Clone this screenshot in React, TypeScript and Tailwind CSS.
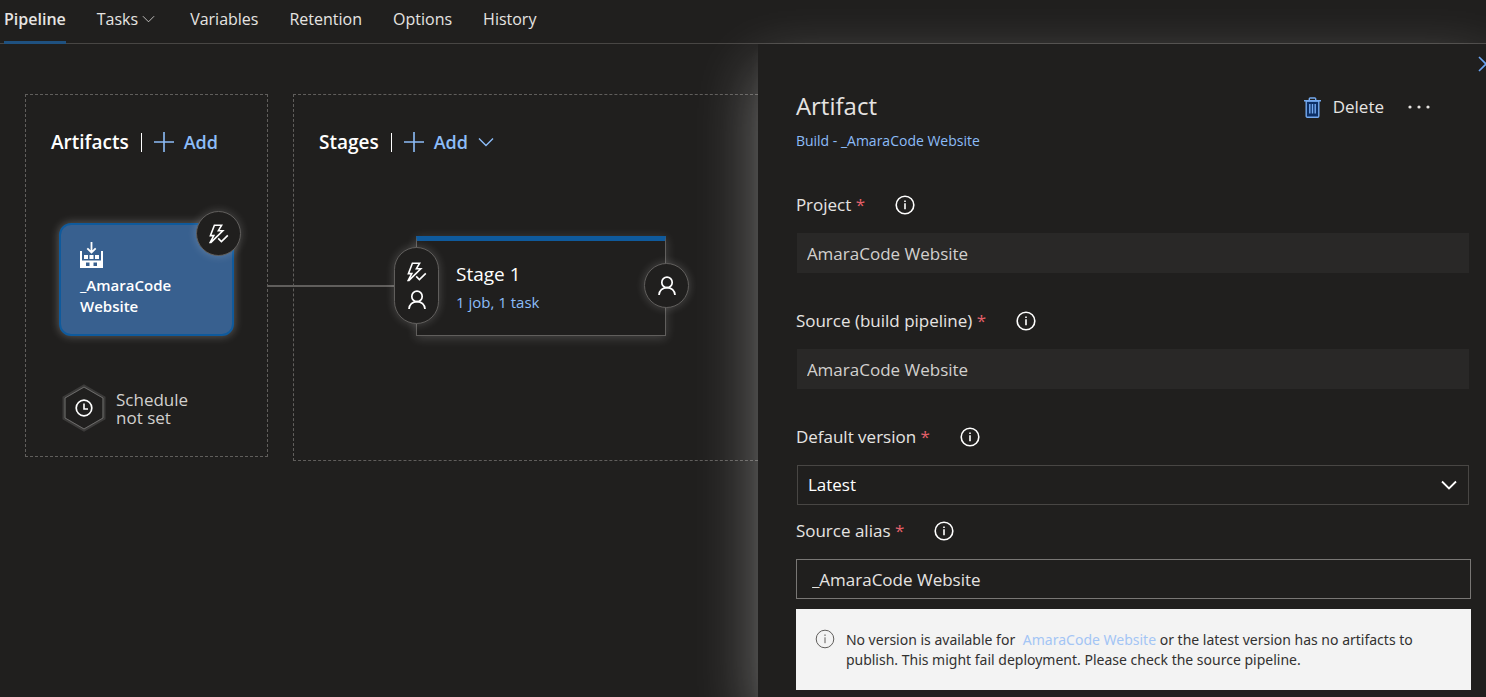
import React from 'react';

type IconProps = { className?: string };

const ChevronDown: React.FC<IconProps> = ({ className }) => (
  <svg className={className} viewBox="0 0 16 10" fill="none" stroke="currentColor" aria-hidden="true">
    <path d="M1 1.5L8 8.5L15 1.5" />
  </svg>
);

const PlusIcon: React.FC = () => (
  <svg className="h-5 w-5" viewBox="0 0 20 20" fill="none" stroke="currentColor" strokeWidth="1.6" aria-hidden="true">
    <path d="M10 0V20M0 10H20" />
  </svg>
);

const TriggerIcon: React.FC = () => (
  <svg className="h-5 w-5" viewBox="0 0 20 20" fill="none" stroke="currentColor" strokeWidth="1.6" aria-hidden="true">
    <path d="M5.4 1.2H12.6L9.4 6.7H13.8L2 18.4H1.2L4.8 11.6H1.4Z" />
    <path d="M9.2 14.4L12.4 17.6L18.8 11.4" />
  </svg>
);

const PersonIcon: React.FC = () => (
  <svg className="h-5 w-[18px]" viewBox="0 0 18 20" fill="none" stroke="currentColor" strokeWidth="1.7" aria-hidden="true">
    <circle cx="9" cy="6.4" r="5.2" />
    <path d="M1 19C1.2 14.8 4.5 11.6 9 11.6S16.8 14.8 17 19" />
  </svg>
);

const BuildIcon: React.FC = () => (
  <svg className="h-[26px] w-[23px]" viewBox="0 0 23 26" fill="currentColor" aria-hidden="true">
    <path d="M11.5 0V10M7.3 6.3L11.5 10.5L15.7 6.3" fill="none" stroke="currentColor" strokeWidth="1.8" />
    <path d="M4 13H8V17H4ZM9.5 13H13.5V17H9.5ZM15 13H19V17H15Z" />
    <path
      fillRule="evenodd"
      d="M0 9H2V18.5H21V9H23V26H0ZM6 20.5V24H9.5V20.5ZM13.5 20.5V24H17V20.5Z"
    />
  </svg>
);

const ScheduleIcon: React.FC = () => (
  <svg className="h-12 w-11 shrink-0" viewBox="0 0 44 48" fill="none" aria-hidden="true">
    <path d="M22 2L42 13.5V34.5L22 46L2 34.5V13.5Z" stroke="#3b3a39" strokeWidth="3" />
    <path d="M22 3L41 14V34L22 45L3 34V14Z" stroke="#6b6a69" />
    <circle cx="22" cy="24" r="7.8" stroke="#ffffff" strokeWidth="1.7" />
    <path d="M22 19.5V25H26" stroke="#ffffff" strokeWidth="1.6" />
  </svg>
);

const InfoIcon: React.FC<IconProps> = ({ className }) => (
  <svg className={className} viewBox="0 0 20 20" fill="none" stroke="currentColor" aria-hidden="true">
    <circle cx="10" cy="10" r="8.8" />
    <path d="M10 8.3V14.2M10 5.4V7" />
  </svg>
);

const TrashIcon: React.FC = () => (
  <svg className="h-[21px] w-[17px]" viewBox="0 0 17 21" fill="none" stroke="#75aaf0" strokeWidth="1.4" aria-hidden="true">
    <path d="M2.2 4H14.8V19C14.8 19.8 14.5 20.2 13.8 20.2H3.2C2.5 20.2 2.2 19.8 2.2 19Z" fill="#0c2f66" />
    <path d="M0 3.7H17M5.3 3.7V1.8C5.3 1.2 5.6 1 6.2 1H10.8C11.4 1 11.7 1.2 11.7 1.8V3.7" />
    <path d="M5.8 7V16.5M8.5 7V16.5M11.2 7V16.5" />
  </svg>
);

const tabs = ['Pipeline', 'Tasks', 'Variables', 'Retention', 'Options', 'History'];

const SectionHeader: React.FC<{ title: string; menu?: boolean }> = ({ title, menu }) => (
  <div className="flex h-[30px] items-center pl-[25px]">
    <h2 className="text-[19px] font-semibold text-white">{title}</h2>
    <span className="mx-3 h-[19px] w-px bg-white" />
    <button type="button" className="flex items-center text-lg font-semibold text-[#8cbcf8]">
      <PlusIcon />
      <span className="ml-2.5">Add</span>
      {menu && <ChevronDown className="ml-2.5 h-[10px] w-4 stroke-[1.4]" />}
    </button>
  </div>
);

const FieldLabel: React.FC<{ id: string; text: string }> = ({ id, text }) => (
  <div className="mb-3.5 flex h-7 items-center">
    <label htmlFor={id} className="text-[17px]">
      {text} <span className="text-[#e3606a]">*</span>
    </label>
    <button type="button" aria-label={`About ${text}`} className="ml-[30px] text-white">
      <InfoIcon className="h-5 w-5 stroke-[1.6]" />
    </button>
  </div>
);

const nodeBadge =
  'flex items-center justify-center border border-[#605e5c] bg-[#201f1e] text-white shadow-[0_0_10px_rgba(255,255,255,0.2)]';

const PipelineCanvas: React.FC = () => (
  <main className="flex min-w-0 flex-1 items-start gap-[25px] overflow-hidden pt-[50px] pl-[25px]">
    <section className="w-[243px] shrink-0 border border-dashed border-[#605e5c] pt-8 pb-6">
      <SectionHeader title="Artifacts" />
      <div className="relative mx-[33px] mt-[66px] h-[113px] rounded-xl border-2 border-[#0f5a9c] bg-[#38608f] pt-[17px] pl-[19px] text-white shadow-[0_0_10px_rgba(255,255,255,0.3)]">
        <BuildIcon />
        <p className="mt-[7px] w-28 text-[15px] leading-[21px] font-semibold">_AmaraCode Website</p>
        <button
          type="button"
          aria-label="Continuous deployment trigger"
          className={`absolute -top-3.5 -right-[9px] h-[45px] w-[45px] rounded-full ${nodeBadge}`}
        >
          <TriggerIcon />
        </button>
      </div>
      <button type="button" className="mt-12 ml-9 flex items-center gap-2.5 text-left">
        <ScheduleIcon />
        <span className="w-20 pt-0.5 text-[17px] leading-[18px] text-[#d2d0ce]">Schedule not set</span>
      </button>
    </section>

    <section className="min-w-0 flex-1 border border-r-0 border-dashed border-[#605e5c] pt-8 pb-[124px]">
      <SectionHeader title="Stages" menu />
      <div className="relative mt-[79px] ml-[122px] h-[100px] w-[250px] border border-t-[5px] border-[#605e5c] border-t-[#0f5a9c] bg-[#201f1e] pt-[19px] pl-[39px] shadow-[0_2px_10px_rgba(255,255,255,0.18)]">
        {/* connector from the artifacts box */}
        <span className="absolute top-11 -left-[149px] h-0.5 w-[127px] bg-[#605e5c]" />
        <button
          type="button"
          aria-label="Pre-deployment conditions"
          className={`absolute top-1.5 -left-[23px] h-[77px] w-[45px] flex-col gap-2 rounded-full ${nodeBadge}`}
        >
          <TriggerIcon />
          <PersonIcon />
        </button>
        <h3 className="text-[19px] leading-7 text-white">Stage 1</h3>
        <a href="#tasks" className="block text-[15px] leading-7 text-[#8cbcf8]">
          1 job, 1 task
        </a>
        <button
          type="button"
          aria-label="Post-deployment conditions"
          className={`absolute top-[22px] -right-6 h-[45px] w-[45px] rounded-full ${nodeBadge}`}
        >
          <PersonIcon />
        </button>
      </div>
    </section>
  </main>
);

const ArtifactPanel: React.FC = () => (
  <aside className="relative w-[49%] shrink-0 overflow-hidden bg-[#201f1e] pt-11 pr-[15px] pb-2 pl-[38px] shadow-[0_26px_58px_rgba(255,255,255,0.36),0_5px_14px_rgba(255,255,255,0.04)]">
    <button type="button" aria-label="Close" className="absolute top-3 -right-2 text-[#6ba5f2]">
      <svg className="h-4 w-4" viewBox="0 0 16 16" fill="none" stroke="currentColor" strokeWidth="1.6" aria-hidden="true">
        <path d="M1 1L15 15M15 1L1 15" />
      </svg>
    </button>

    <header className="mb-[34px] flex items-start justify-between">
      <div>
        <h1 className="text-2xl leading-9">Artifact</h1>
        <p className="text-sm leading-[33px] text-[#8cbcf8]">Build - _AmaraCode Website</p>
      </div>
      <div className="mr-[41px] flex h-[38px] items-center">
        <button type="button" className="flex items-center gap-3 text-[17px]">
          <TrashIcon />
          Delete
        </button>
        <button type="button" aria-label="More actions" className="ml-6">
          <svg className="h-1 w-[22px]" viewBox="0 0 22 4" fill="currentColor" aria-hidden="true">
            <circle cx="2" cy="2" r="1.6" />
            <circle cx="11" cy="2" r="1.6" />
            <circle cx="20" cy="2" r="1.6" />
          </svg>
        </button>
      </div>
    </header>

    <div className="mb-[34px]">
      <FieldLabel id="project" text="Project" />
      <div className="mr-0.5 ml-px flex">
        <input
          id="project"
          readOnly
          value="AmaraCode Website"
          className="h-10 w-full bg-[#292827] px-2.5 text-[17px] text-[#d2d0ce] outline-none"
        />
      </div>
    </div>

    <div className="mb-[34px]">
      <FieldLabel id="source" text="Source (build pipeline)" />
      <div className="mr-0.5 ml-px flex">
        <input
          id="source"
          readOnly
          value="AmaraCode Website"
          className="h-10 w-full bg-[#292827] px-2.5 text-[17px] text-[#d2d0ce] outline-none"
        />
      </div>
    </div>

    <div className="mb-3">
      <FieldLabel id="version" text="Default version" />
      <div className="relative mr-0.5 ml-px flex">
        <select
          id="version"
          className="h-10 w-full appearance-none border border-[#484644] bg-[#201f1e] px-2.5 text-[17px] text-white"
        >
          <option>Latest</option>
        </select>
        <ChevronDown className="pointer-events-none absolute top-[15px] right-3 h-[10px] w-4 stroke-[1.8] text-white" />
      </div>
    </div>

    <FieldLabel id="alias" text="Source alias" />
    <input
      id="alias"
      defaultValue="_AmaraCode Website"
      className="block h-10 w-full border border-[#797775] bg-[#201f1e] px-[15px] text-[17px]"
    />

    <div role="status" className="mt-2.5 flex min-h-20 items-start gap-[11px] bg-[#f3f3f3] py-5 pl-[19px] text-[#323130]">
      <InfoIcon className="h-5 w-5 shrink-0 text-[#605e5c]" />
      <p className="max-w-[590px] pt-px font-['Noto_Sans','Open_Sans',sans-serif] text-sm leading-5">
        No version is available for{' '}
        <a href="#build" className="ml-1 text-[#a3c5f5]">
          AmaraCode Website
        </a>{' '}
        or the latest version has no artifacts to publish. This might fail deployment. Please check the source
        pipeline.
      </p>
    </div>
  </aside>
);

export default function App() {
  return (
    <div className="flex min-h-screen flex-col overflow-hidden bg-[#201f1e] font-['Open_Sans','Noto_Sans',sans-serif] text-[#e6e4e2]">
      <nav className="flex h-11 gap-[31px] border-b border-[#484644] pl-1 text-base">
        {tabs.map((tab) => (
          <a
            key={tab}
            href={`#${tab.toLowerCase()}`}
            className={`flex h-11 items-center pb-1.5 ${
              tab === 'Pipeline' ? 'border-b-[3px] border-[#1f5180] pt-[3px] font-semibold' : ''
            }`}
          >
            {tab}
            {tab === 'Tasks' && <ChevronDown className="mr-1 ml-1 h-2 w-[13px]" />}
          </a>
        ))}
      </nav>
      <div className="flex flex-1">
        <PipelineCanvas />
        <ArtifactPanel />
      </div>
    </div>
  );
}
